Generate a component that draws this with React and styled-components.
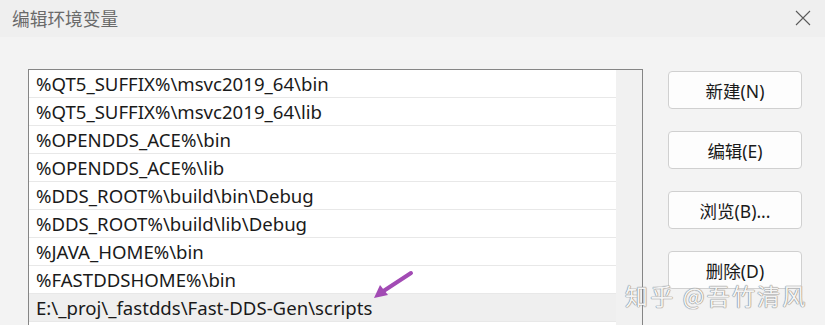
import React from 'react';
import styled, { createGlobalStyle } from 'styled-components';

const GlobalStyle = createGlobalStyle`
  html, body {
    margin: 0;
    padding: 0;
    overflow: hidden;
    background: #f3f3f3;
  }
`;

const Window = styled.div`
  position: relative;
  width: 825px;
  height: 325px;
  overflow: hidden;
  background: #f3f3f3;
  font-family: "Noto Sans", "Noto Sans CJK SC", sans-serif;
  color: #1a1a1a;
`;

const TitleBar = styled.div`
  height: 37px;
  display: flex;
  align-items: center;
  justify-content: space-between;
  padding: 0 14px 2px 12px;
  box-sizing: border-box;
  background: #efefef;
`;

const Title = styled.div`
  font-family: "Noto Sans CJK SC", sans-serif;
  font-size: 17.7px;
  color: #6a6a6a;
`;

const CloseIcon = styled.svg`
  width: 16px;
  height: 16px;
  display: block;
`;

const Body = styled.div`
  display: flex;
  align-items: flex-start;
  padding: 32px 0 0 28px;
`;

const ListBox = styled.div`
  width: 615px;
  height: 320px;
  box-sizing: border-box;
  border: 1px solid #858585;
  display: flex;
  background: #fff;
`;

const Rows = styled.div`
  flex: 1;
  display: flex;
  flex-direction: column;
`;

const Row = styled.div`
  height: 28px;
  box-sizing: border-box;
  border-bottom: 1px solid #e8e8e8;
  padding-left: 7px;
  display: flex;
  align-items: center;
  font-size: 18.6px;
  white-space: nowrap;
  background: ${(p) => (p.selected ? '#efefef' : '#fff')};
`;

const ScrollTrack = styled.div`
  width: 26px;
  background: #f1f1f1;
`;

const Buttons = styled.div`
  display: flex;
  flex-direction: column;
  gap: 22px;
  margin-left: 25px;
  margin-top: 2px;
`;

const Button = styled.button`
  width: 134px;
  height: 38px;
  box-sizing: border-box;
  border: 1px solid #d0d0d0;
  border-radius: 4px;
  background: #fdfdfd;
  font-family: inherit;
  font-size: 17.5px;
  color: #1a1a1a;
  padding: 0;
`;

const Watermark = styled.div`
  position: absolute;
  left: 625px;
  top: 278px;
  font-family: "Noto Sans CJK SC", sans-serif;
  font-size: 23px;
  letter-spacing: 2.2px;
  color: rgba(255, 255, 255, 0.92);
  text-shadow: 0 0 1px #8a8a8a, 0 0 1px #8a8a8a, 0 0 1px #8a8a8a;
  white-space: nowrap;
`;

const Arrow = styled.svg`
  position: absolute;
  left: 368px;
  top: 266px;
  width: 50px;
  height: 40px;
`;

const entries = [
  '%QT5_SUFFIX%\\msvc2019_64\\bin',
  '%QT5_SUFFIX%\\msvc2019_64\\lib',
  '%OPENDDS_ACE%\\bin',
  '%OPENDDS_ACE%\\lib',
  '%DDS_ROOT%\\build\\bin\\Debug',
  '%DDS_ROOT%\\build\\lib\\Debug',
  '%JAVA_HOME%\\bin',
  '%FASTDDSHOME%\\bin',
  'E:\\_proj\\_fastdds\\Fast-DDS-Gen\\scripts',
];

export default function App() {
  return (
    <Window>
      <GlobalStyle />
      <TitleBar>
        <Title>编辑环境变量</Title>
        <CloseIcon viewBox="0 0 16 16">
          <path d="M1 1 L15 15 M15 1 L1 15" stroke="#5a5a5a" strokeWidth="1.1" fill="none" />
        </CloseIcon>
      </TitleBar>
      <Body>
        <ListBox>
          <Rows>
            {entries.map((e, i) => (
              <Row key={e} selected={i === entries.length - 1}>{e}</Row>
            ))}
          </Rows>
          <ScrollTrack />
        </ListBox>
        <Buttons>
          <Button>新建(N)</Button>
          <Button>编辑(E)</Button>
          <Button>浏览(B)...</Button>
          <Button>删除(D)</Button>
        </Buttons>
      </Body>
      <Arrow viewBox="0 0 50 40">
        <line x1="43" y1="7" x2="14" y2="26" stroke="#a24bb4" strokeWidth="4" strokeLinecap="round" />
        <polygon points="6,32 12,19 20,29" fill="#a24bb4" />
      </Arrow>
      <Watermark>知乎 @吾竹清风</Watermark>
    </Window>
  );
}
